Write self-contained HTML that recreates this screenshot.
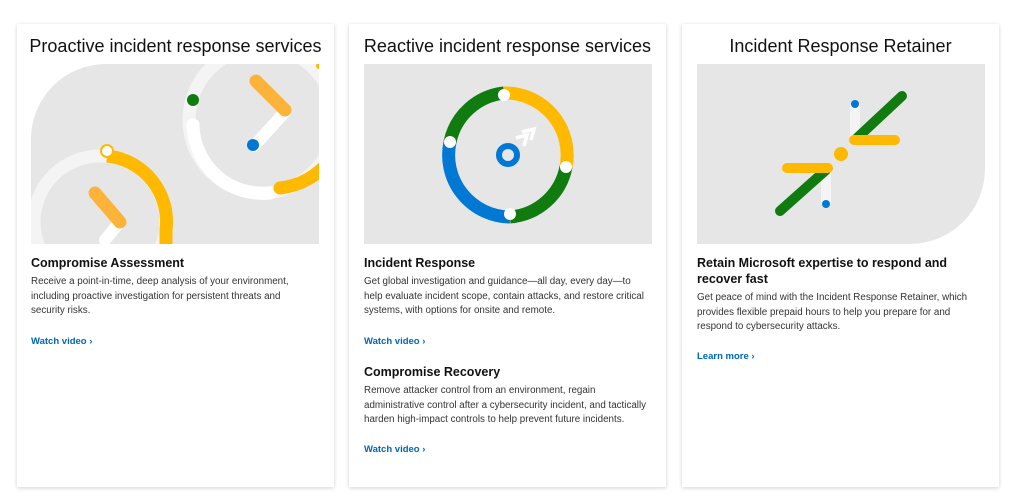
<!DOCTYPE html>
<html><head><style>
body{margin:0;width:1024px;height:500px;background:#fff;font-family:"Liberation Sans",sans-serif;position:relative;overflow:hidden;color:#1a1a1a}
.card{position:absolute;top:24px;width:317px;height:463px;background:#fff;box-shadow:0 1px 4px rgba(0,0,0,.18)}
.t{position:absolute;top:34px;left:0;width:100%;text-align:center;font-size:18px;white-space:nowrap;color:#111}
.img{position:absolute;top:40px;left:14px;width:288px;height:180px;background:#e6e6e6;overflow:hidden}
.a{position:absolute;left:14px;white-space:nowrap}
h3{margin:0;font-size:12.5px;font-weight:bold;line-height:16px;color:#111}
p{margin:0;font-size:9.8px;line-height:14.7px;color:#333}
.l{font-size:9.5px;font-weight:bold;color:#0067b8}
</style></head><body>

<div class="card" style="left:17px">
<div class="t" style="top:12px">Proactive incident response services</div>
<div class="img" style="border-top-left-radius:75px">
<svg width="288" height="180" viewBox="31 64 288 180">
<circle cx="100" cy="222" r="66" fill="none" stroke="#f4f4f4" stroke-width="13"/>
<path d="M107 156 A66 66 0 0 1 166 230 L166 250" fill="none" stroke="#ffb900" stroke-width="13"/>
<circle cx="107" cy="151" r="6" fill="#fff" stroke="#ffb900" stroke-width="2"/>
<line x1="120" y1="222" x2="105" y2="240" stroke="#fff" stroke-width="12" stroke-linecap="round"/>
<line x1="95" y1="193" x2="120" y2="222" stroke="#fbb33a" stroke-width="13" stroke-linecap="round"/>
<circle cx="262" cy="120" r="73" fill="none" stroke="#f4f4f4" stroke-width="13"/>
<path d="M193 125 A70 70 0 0 0 270 193" fill="none" stroke="#fff" stroke-width="13" stroke-linecap="round"/>
<path d="M280 188 A73 73 0 0 0 330 160" fill="none" stroke="#ffb900" stroke-width="13" stroke-linecap="round"/>
<circle cx="319" cy="66" r="3" fill="#ffb900"/>
<line x1="285" y1="112" x2="254" y2="146" stroke="#fff" stroke-width="12" stroke-linecap="round"/>
<line x1="256" y1="81" x2="285" y2="110" stroke="#fbb33a" stroke-width="13" stroke-linecap="round"/>
<circle cx="193" cy="100" r="6" fill="#107c10"/>
<circle cx="253" cy="145" r="6" fill="#0078d4"/>
</svg></div>
<div class="a" style="top:231px"><h3>Compromise Assessment</h3></div>
<div class="a" style="top:251px"><p>Receive a point-in-time, deep analysis of your environment,<br>including proactive investigation for persistent threats and<br>security risks.</p></div>
<div class="a l" style="top:312px">Watch video &#8250;</div>
</div>

<div class="card" style="left:349px">
<div class="t" style="top:12px">Reactive incident response services</div>
<div class="img" style="left:15px">
<svg width="288" height="180" viewBox="364 64 288 180">
<g fill="none" stroke-width="13">
<path d="M450 142 A62 62 0 0 1 504 93" stroke="#107c10"/>
<path d="M504 93 A62 62 0 0 1 566 167" stroke="#ffb900"/>
<path d="M566 167 A62 62 0 0 1 510 217" stroke="#107c10"/>
<path d="M510 217 A62 62 0 0 1 450 142" stroke="#0078d4"/>
</g>
<circle cx="504" cy="95" r="6" fill="#fff"/><circle cx="566" cy="167" r="6" fill="#fff"/>
<circle cx="510" cy="214" r="6" fill="#fff"/><circle cx="450" cy="142" r="6" fill="#fff"/>
<circle cx="508" cy="155" r="9" fill="none" stroke="#0078d4" stroke-width="6"/>
<path d="M516 138 L527 135 L524 146 M522 132 L534 129 L531 140" fill="none" stroke="#fff" stroke-width="3.5"/>
</svg></div>
<div class="a" style="top:231px;left:15px"><h3>Incident Response</h3></div>
<div class="a" style="top:251px;left:15px"><p>Get global investigation and guidance—all day, every day—to<br>help evaluate incident scope, contain attacks, and restore critical<br>systems, with options for onsite and remote.</p></div>
<div class="a l" style="top:312px;left:15px">Watch video &#8250;</div>
<div class="a" style="top:340px;left:15px"><h3>Compromise Recovery</h3></div>
<div class="a" style="top:360px;left:15px"><p>Remove attacker control from an environment, regain<br>administrative control after a cybersecurity incident, and tactically<br>harden high-impact controls to help prevent future incidents.</p></div>
<div class="a l" style="top:420px;left:15px">Watch video &#8250;</div>
</div>

<div class="card" style="left:682px">
<div class="t" style="top:12px">Incident Response Retainer</div>
<div class="img" style="left:15px;border-bottom-right-radius:75px">
<svg width="288" height="180" viewBox="697 64 288 180">
<line x1="855" y1="104" x2="855" y2="140" stroke="#f4f4f4" stroke-width="10"/>
<line x1="826" y1="168" x2="826" y2="204" stroke="#f4f4f4" stroke-width="10"/>
<line x1="857" y1="138" x2="902" y2="96" stroke="#107c10" stroke-width="10" stroke-linecap="round"/>
<line x1="780" y1="211" x2="826" y2="170" stroke="#107c10" stroke-width="10" stroke-linecap="round"/>
<line x1="787" y1="168" x2="828" y2="168" stroke="#ffb900" stroke-width="10" stroke-linecap="round"/>
<line x1="854" y1="140" x2="895" y2="140" stroke="#ffb900" stroke-width="10" stroke-linecap="round"/>
<circle cx="841" cy="154" r="7" fill="#ffb900"/>
<circle cx="855" cy="104" r="4" fill="#0078d4"/><circle cx="826" cy="204" r="4" fill="#0078d4"/>
</svg></div>
<div class="a" style="top:231px;left:15px"><h3>Retain Microsoft expertise to respond and<br>recover fast</h3></div>
<div class="a" style="top:267px;left:15px"><p>Get peace of mind with the Incident Response Retainer, which<br>provides flexible prepaid hours to help you prepare for and<br>respond to cybersecurity attacks.</p></div>
<div class="a l" style="top:327px;left:15px">Learn more &#8250;</div>
</div>
</body></html>
